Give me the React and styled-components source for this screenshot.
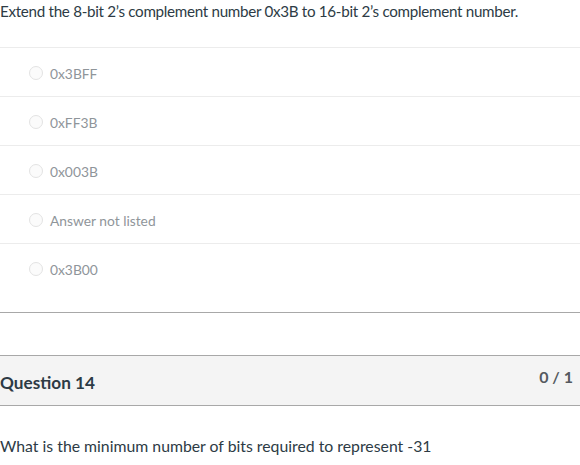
import React from "react";
import styled, { createGlobalStyle } from "styled-components";

const GlobalStyle = createGlobalStyle`
  body {
    margin: 0;
    font-family: Lato, "Open Sans", sans-serif;
    background: #fff;
    color: #2d3b45;
  }
`;

const Page = styled.div`
  width: 580px;
  overflow: hidden;
`;

const Prompt = styled.p`
  margin: 0;
  height: 47px;
  padding-top: 2px;
  box-sizing: border-box;
  font-size: 15.2px;
  letter-spacing: -0.3px;
  line-height: 18px;
  color: #2d3b45;
  white-space: nowrap;
`;

const Answers = styled.div`
  display: flex;
  flex-direction: column;
`;

const Option = styled.label`
  display: flex;
  align-items: flex-start;
  gap: 7px;
  height: 49px;
  box-sizing: border-box;
  border-top: 1px solid #ececec;
  padding: 18px 0 0 29px;
  font-size: 13.8px;
  line-height: 16px;
  color: #8f959a;
`;

const Radio = styled.span`
  width: 12px;
  height: 12px;
  border-radius: 50%;
  border: 1px solid #e3e3e3;
  background: #fbfbfb;
  flex-shrink: 0;
`;

const Spacer = styled.div`
  height: 20px;
`;

const Divider = styled.hr`
  margin: 0 0 42px;
  border: none;
  border-top: 1px solid #a8a8a8;
`;

const Header = styled.div`
  display: flex;
  align-items: center;
  justify-content: space-between;
  height: 51px;
  box-sizing: border-box;
  background: #f4f4f4;
  border-top: 1px solid #a8a8a8;
  border-bottom: 1px solid #a8a8a8;
`;

const Title = styled.h2`
  margin: 0;
  padding-top: 3px;
  font-size: 17.2px;
  font-weight: 700;
  color: #2d3b45;
`;

const Points = styled.div`
  display: flex;
  align-self: flex-start;
  margin-top: 11px;
  font-size: 16px;
  font-weight: 700;
  color: #555a5f;
  white-space: nowrap;
  margin-right: -40px;
`;

const Flag = styled.span`
  display: inline-block;
  width: 40px;
  height: 16px;
  margin-left: 7px;
  margin-top: 2px;
  background: #f4c89a;
`;

const Question = styled.p`
  margin: 30px 0 0;
  font-size: 15.8px;
  line-height: 20px;
  color: #2d3b45;
`;

const options = ["0x3BFF", "0xFF3B", "0x003B", "Answer not listed", "0x3B00"];

export default function App() {
  return (
    <Page>
      <GlobalStyle />
      <Prompt>
        Extend the 8-bit 2’s complement number 0x3B to 16-bit 2’s complement
        number.
      </Prompt>
      <Answers>
        {options.map((o) => (
          <Option key={o}>
            <Radio />
            {o}
          </Option>
        ))}
      </Answers>
      <Spacer />
      <Divider />
      <Header>
        <Title>Question 14</Title>
        <Points>
          0 / 1<Flag />
        </Points>
      </Header>
      <Question>What is the minimum number of bits required to represent -31</Question>
    </Page>
  );
}
